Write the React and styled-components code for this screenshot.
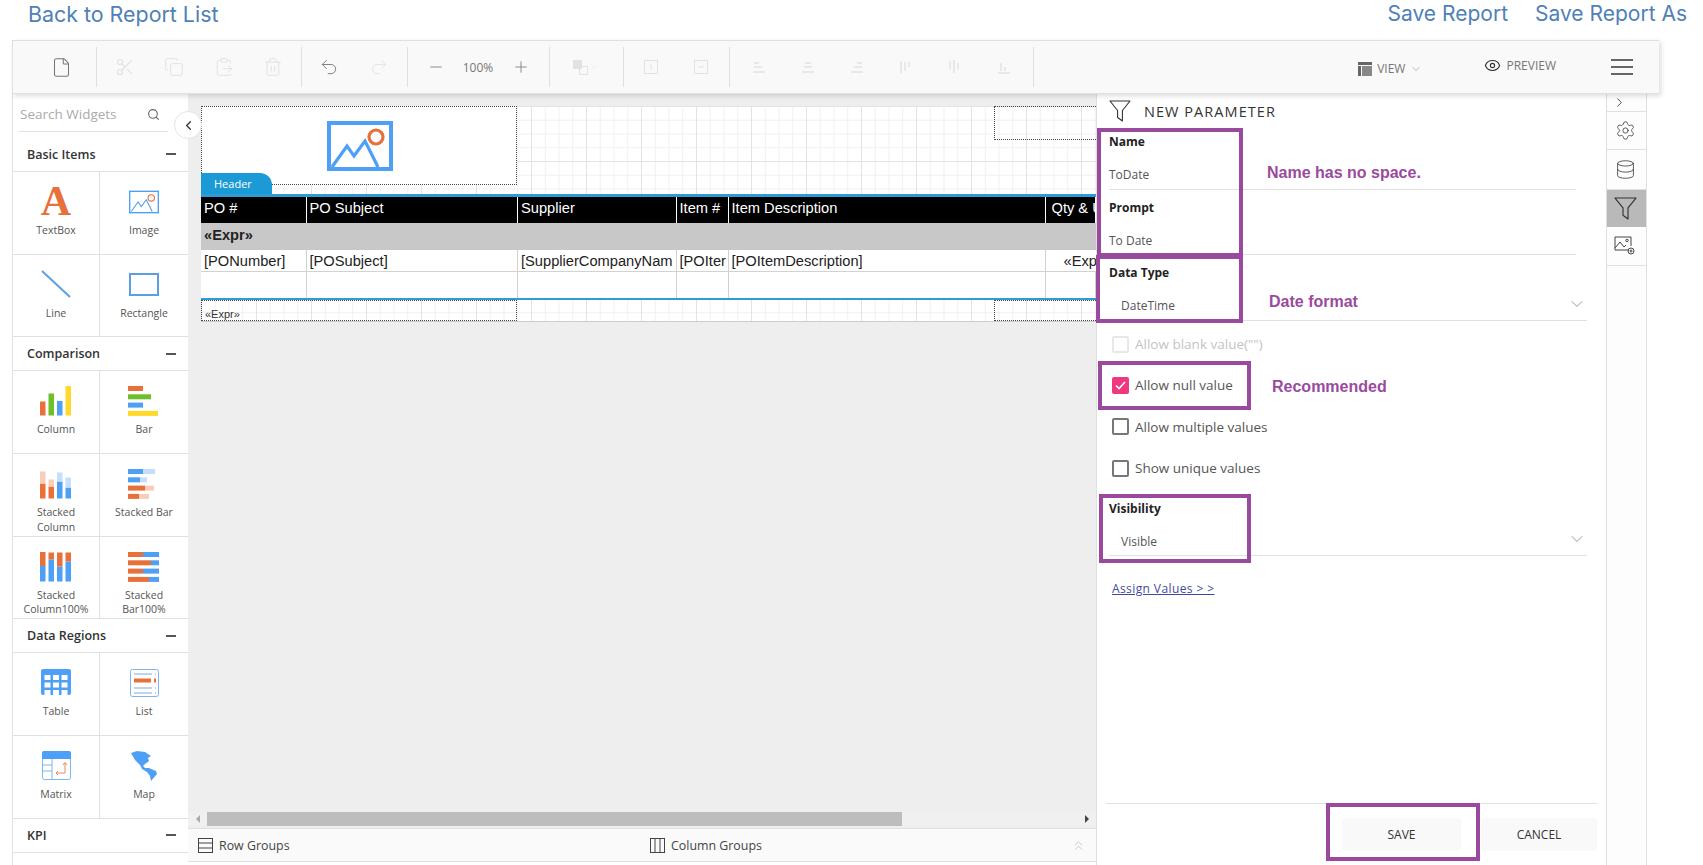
import React from 'react'
import styled, { createGlobalStyle } from 'styled-components'
import {
  File, Scissors, Copy, ClipboardPaste, Trash2, Undo2, Redo2, Minus, Plus, Eye,
  Search, ChevronRight, ChevronDown, ChevronsUp, Settings, Database, ChevronLeft
} from 'lucide-react'

const purple = '#9a4a9e'
const faint = '#e2e2e2'
const line = '#e0e0e0'
const orange = '#e8703a'
const blue = '#4da0f5'
const green = '#6fbf2a'
const yellow = '#ffd92a'
const lightOrange = '#f8cdb9'
const lightBlue = '#c4dffb'

const GlobalStyle = createGlobalStyle`
  html, body {
    margin: 0;
    height: 865px;
    overflow: hidden;
    background: #fff;
    font-family: 'Open Sans', sans-serif;
  }
`

const Page = styled.div`
  width: 1703px;
  height: 865px;
  overflow: hidden;
`

const TopBar = styled.div`
  height: 40px;
  box-sizing: border-box;
  padding: 0 16px 12px 28px;
  display: flex;
  align-items: center;
  justify-content: space-between;
`

const TopLinks = styled.div`
  display: flex;
  gap: 27px;
`

const TopLink = styled.a`
  font-family: 'Inter', sans-serif;
  font-size: ${p => p.$size || 21}px;
  line-height: 28px;
  color: #4f80b8;
  white-space: nowrap;
`

const Toolbar = styled.div`
  margin-left: 12px;
  width: 1647px;
  height: 54px;
  box-sizing: border-box;
  background: #f9f9f9;
  border: 1px solid ${line};
  border-right: 0;
  box-shadow: 2px 2px 5px rgba(0, 0, 0, 0.14);
  display: flex;
  align-items: center;
  position: relative;
  z-index: 2;
`

const ToolGroup = styled.div`
  width: ${p => p.$w}px;
  height: 40px;
  box-sizing: border-box;
  flex: none;
  display: flex;
  align-items: center;
  justify-content: ${p => (p.$start ? 'flex-start' : 'center')};
  padding-left: ${p => p.$pad || 0}px;
  border-right: 1px solid ${line};
`

const Tool = styled.div`
  width: ${p => p.$w || 49.5}px;
  flex: none;
  display: flex;
  align-items: center;
  justify-content: center;
  color: ${p => (p.$on ? '#777' : faint)};
  font-size: 12px;
`

const ToolRight = styled.div`
  margin-left: auto;
  display: flex;
  align-items: center;
  padding-right: 26px;
`

const ToolText = styled.div`
  display: flex;
  align-items: center;
  gap: ${p => p.$gap || 5}px;
  margin-right: ${p => p.$mr}px;
  margin-top: ${p => p.$mt || 0}px;
  font-size: 12px;
  color: #777;
`

const Burger = styled.div`
  width: 22px;
  height: 16px;
  border-top: 2px solid #666;
  border-bottom: 2px solid #666;
  box-sizing: border-box;
  display: flex;
  align-items: center;
  &::before {
    content: '';
    width: 100%;
    height: 2px;
    background: #666;
  }
`

const Body = styled.div`
  display: flex;
  margin-left: 12px;
  height: 771px;
`

const Sidebar = styled.div`
  width: 176px;
  flex: none;
  box-sizing: border-box;
  border-left: 1px solid ${line};
  position: relative;
`

const SearchRow = styled.div`
  margin: 0 20px 0 6px;
  height: 38px;
  box-sizing: border-box;
  border-bottom: 1px solid ${line};
  padding: 3px 8px 0 1px;
  display: flex;
  align-items: center;
  justify-content: space-between;
  font-size: 13.5px;
  color: #aaa;
`

const SearchIcon = styled(Search)`
  color: #666;
`

const CollapseButton = styled.div`
  position: absolute;
  top: 17px;
  right: -14px;
  width: 28px;
  height: 28px;
  border-radius: 50%;
  background: #fff;
  border: 1px solid #e4e4e4;
  box-sizing: border-box;
  display: flex;
  align-items: center;
  justify-content: center;
  color: #333;
  z-index: 3;
`

const SectionHead = styled.div`
  height: ${p => p.$h || 34}px;
  box-sizing: border-box;
  padding: ${p => (p.$first ? '5px' : '0')} 12px 0 14px;
  display: flex;
  align-items: center;
  justify-content: space-between;
  font-size: 12.5px;
  font-weight: 600;
  color: #333;
  border-bottom: 1px solid ${line};
`

const Collapse = styled.span`
  width: 10px;
  height: 2px;
  background: #555;
`

const WidgetGrid = styled.div`
  display: grid;
  grid-template-columns: 87px 88px;
`

const WidgetCell = styled.div`
  height: 82.7px;
  box-sizing: border-box;
  padding-top: 13px;
  border-bottom: 1px solid ${line};
  border-right: 1px solid ${line};
  display: flex;
  flex-direction: column;
  align-items: center;
  overflow: hidden;
  &:nth-child(2n) {
    border-right: 0;
  }
`

const WidgetIcon = styled.div`
  height: 33px;
  flex: none;
  display: flex;
  align-items: center;
  justify-content: center;
`

const LetterIcon = styled.span`
  font-family: 'Liberation Serif', serif;
  font-size: 42px;
  line-height: 33px;
  font-weight: 700;
  color: ${orange};
`

const WidgetLabel = styled.div`
  max-width: 72px;
  margin-top: 5px;
  font-size: 10.5px;
  line-height: 14.5px;
  text-align: center;
  color: #555;
`

const Canvas = styled.div`
  width: 908px;
  flex: none;
  display: flex;
  flex-direction: column;
  height: 768px;
  background: #eee;
  border-bottom: 1px solid ${line};
  box-sizing: border-box;
`

const ScrollArea = styled.div`
  flex: 1;
  min-height: 0;
  overflow: hidden;
  padding: 12px 0 0 13px;
`

const Surface = styled.div`
  width: 895px;
  background-color: #fff;
  background-image:
    linear-gradient(to right, #e3e3e3 1px, transparent 1px),
    linear-gradient(to bottom, #e3e3e3 1px, transparent 1px),
    linear-gradient(to right, #f0f0f0 1px, transparent 1px),
    linear-gradient(to bottom, #f0f0f0 1px, transparent 1px);
  background-size: 55px 55px, 55px 55px, 13.75px 13.75px, 13.75px 13.75px;
  border-bottom: 1px solid #ccc;
  overflow: hidden;
`

const HeaderBand = styled.div`
  height: 88px;
  position: relative;
`

const DottedBox = styled.div`
  position: absolute;
  top: 0;
  left: ${p => p.$x}px;
  width: ${p => p.$w}px;
  height: ${p => p.$h}px;
  box-sizing: border-box;
  border: 1px dotted #444;
  background: ${p => p.$bg || 'transparent'};
`

const PlaceholderSlot = styled.div`
  position: absolute;
  left: 125px;
  top: 14px;
`

const HeaderTab = styled.div`
  position: absolute;
  left: 0;
  bottom: 0;
  width: 71px;
  height: 21px;
  box-sizing: border-box;
  padding-left: 13px;
  background: #1b9ad6;
  color: #fff;
  font-size: 11px;
  line-height: 22px;
  border-top-right-radius: 12px;
`

const BlueRule = styled.div`
  height: 2.5px;
  background: #2f9bd6;
`

const ReportRow = styled.div`
  display: grid;
  grid-template-columns: 105.5px 211.5px 158.5px 52px 317px 50.5px;
  height: ${p => p.$h}px;
  background: ${p => p.$bg || '#fff'};
  color: ${p => p.$color || '#222'};
  font-family: 'Liberation Sans', sans-serif;
  font-size: 14.67px;
  font-weight: ${p => (p.$bold ? 700 : 400)};
`

const ReportCell = styled.div`
  box-sizing: border-box;
  padding-left: ${p => p.$pad || 3}px;
  overflow: hidden;
  white-space: nowrap;
  line-height: ${p => p.$lh || 22}px;
  border-right: ${p => (p.$plain ? 0 : `1px solid ${p.$edge || '#d2d2d2'}`)};
  border-bottom: ${p => (p.$rule ? '1px solid #d2d2d2' : 0)};
`

const WideCell = styled(ReportCell)`
  grid-column: 1 / -1;
  border-right: 0;
`

const FooterBand = styled.div`
  height: 20.5px;
  position: relative;
`

const FooterExpr = styled.div`
  position: absolute;
  left: 3px;
  top: 6px;
  font-family: 'Liberation Sans', sans-serif;
  font-size: 11px;
  line-height: 14px;
  color: #333;
`

const ScrollBar = styled.div`
  height: 14px;
  margin-bottom: 2px;
  flex: none;
  display: flex;
  align-items: center;
  background: #f0f0f0;
`

const ScrollThumb = styled.div`
  width: 695px;
  height: 14px;
  background: #bdbdbd;
  margin: 0 auto 0 7px;
`

const Arrow = styled.span`
  width: 0;
  height: 0;
  border-top: 4px solid transparent;
  border-bottom: 4px solid transparent;
  border-${p => (p.$right ? 'left' : 'right')}: 4px solid ${p => (p.$right ? '#444' : '#aaa')};
  margin: ${p => (p.$right ? '0 7px 0 0' : '0 0 0 8px')};
`

const GroupBar = styled.div`
  height: 33px;
  flex: none;
  box-sizing: border-box;
  background: #fafafa;
  border-top: 1px solid ${line};
  display: grid;
  grid-template-columns: 452px 1fr 36px;
  align-items: center;
  padding-left: 10px;
  font-size: 12.4px;
  color: #444;
`

const GroupLabel = styled.div`
  display: flex;
  align-items: center;
  gap: 6px;
`

const UpChevrons = styled(ChevronsUp)`
  color: #aaa;
  justify-self: center;
`

const Panel = styled.div`
  width: 510px;
  flex: none;
  box-sizing: border-box;
  position: relative;
  display: flex;
  flex-direction: column;
  padding-left: 12px;
  border-left: 1px solid ${line};
`

const PanelHead = styled.div`
  height: 30px;
  box-sizing: border-box;
  padding-top: 4px;
  flex: none;
  display: flex;
  align-items: center;
  gap: 13px;
  font-size: 14.5px;
  letter-spacing: 1.05px;
  color: #333;
`

const Field = styled.div`
  height: 65.67px;
  box-sizing: border-box;
  padding-top: 9px;
  width: ${p => p.$w}px;
  border-bottom: 1px solid ${line};
  position: relative;
`

const FieldLabel = styled.div`
  font-size: 12px;
  line-height: 18px;
  font-weight: 700;
  color: #222;
`

const FieldValue = styled.div`
  margin-top: 15px;
  padding-left: ${p => p.$indent || 0}px;
  font-size: 12px;
  line-height: 18px;
  color: #555;
`

const FieldChevron = styled(ChevronDown)`
  position: absolute;
  right: 0;
  bottom: 6px;
  color: #888;
`

const CheckRows = styled.div`
  margin-top: 2.5px;
  margin-bottom: 2px;
`

const CheckRow = styled.div`
  height: 41.3px;
  display: flex;
  align-items: center;
  gap: 6px;
  padding-left: 3px;
  font-size: 13.5px;
  color: ${p => (p.$off ? '#c4c4c4' : '#555')};
`

const CheckBox = styled.span`
  width: 17px;
  height: 17px;
  flex: none;
  box-sizing: border-box;
  border-radius: 2px;
  border: ${p => (p.$on ? 0 : `2px solid ${p.$off ? '#e8e8e8' : '#777'}`)};
  background: ${p => (p.$on ? '#f0387e' : '#fff')};
  display: flex;
  align-items: center;
  justify-content: center;
`

const AssignLink = styled.a`
  margin: 24px 0 0 3px;
  font-size: 12px;
  line-height: 18px;
  letter-spacing: 0.4px;
  color: #3f4a9e;
  text-decoration: underline;
`

const PanelFoot = styled.div`
  margin: auto 9px 0 -3px;
  height: 62.5px;
  box-sizing: border-box;
  flex: none;
  border-top: 1px solid ${line};
  padding-top: 14px;
  display: flex;
  justify-content: flex-end;
  gap: 20px;
`

const FootButton = styled.div`
  width: ${p => p.$w}px;
  height: 33px;
  background: #f9f9f9;
  border-radius: 3px;
  display: flex;
  align-items: center;
  justify-content: center;
  font-size: 12px;
  color: #333;
`

const Mark = styled.div`
  position: absolute;
  left: ${p => p.$x}px;
  top: ${p => p.$y}px;
  width: ${p => p.$w}px;
  height: ${p => p.$h}px;
  box-sizing: border-box;
  border: 4.5px solid ${purple};
  pointer-events: none;
`

const Note = styled.div`
  position: absolute;
  left: ${p => p.$x}px;
  top: ${p => p.$y}px;
  font-family: 'Liberation Sans', sans-serif;
  font-size: 16px;
  line-height: 18px;
  font-weight: 700;
  color: ${purple};
  white-space: nowrap;
`

const Strip = styled.div`
  width: 41px;
  flex: none;
  box-sizing: border-box;
  background: #fdfdfd;
  border-left: 1px solid ${line};
  border-right: 1px solid ${line};
`

const StripItem = styled.div`
  height: ${p => p.$h}px;
  box-sizing: border-box;
  background: ${p => (p.$active ? '#b9b9b9' : 'transparent')};
  border-bottom: 1px solid ${p => (p.$active ? '#b9b9b9' : line)};
  display: flex;
  align-items: center;
  justify-content: ${p => (p.$left ? 'flex-start' : 'center')};
  padding-left: ${p => (p.$left ? 5 : 0)}px;
  padding-right: ${p => (p.$left ? 0 : 3)}px;
  color: #444;
`

const FunnelIcon = ({ size = 22 }) => (
  <svg width={size} height={size} viewBox="0 0 22 22" fill="none" stroke="#333" strokeWidth="1.1">
    <path d="M1 1h20l-7.6 9.5V21l-4.8-3.5v-7z" strokeLinejoin="round" />
  </svg>
)

const ImageSettingsIcon = () => (
  <svg width="22" height="20" viewBox="0 0 22 20" fill="none" stroke="#444" strokeWidth="1">
    <path d="M15 14H1V1h16v9" />
    <path d="M1 12l5-6 4 5 2-2" />
    <circle cx="13" cy="4.5" r="1.2" />
    <circle cx="17" cy="15" r="3" />
    <circle cx="17" cy="15" r="1" />
  </svg>
)

const PictureIcon = ({ w, h, sw }) => (
  <svg width={w} height={h} viewBox="0 0 66 50" fill="none">
    <rect x={sw / 2} y={sw / 2} width={66 - sw} height={50 - sw} stroke={blue} strokeWidth={sw} fill="#fff" />
    <path d="M5 46l15-21 7 10 11-15 13 26" stroke={blue} strokeWidth={sw * 0.8} />
    <circle cx="49" cy="16" r="7" stroke={orange} strokeWidth={sw * 0.8} />
  </svg>
)

const Bars = ({ bars, vertical }) => (
  <svg width="32" height="31" viewBox="0 0 32 31">
    {bars.map((b, i) => {
      let pos = 0
      return b.map(([len, fill], j) => {
        const from = pos
        pos += len
        return vertical
          ? <rect key={`${i}-${j}`} x={i * 8.5} y={30.5 - pos} width="5.5" height={len} fill={fill} />
          : <rect key={`${i}-${j}`} y={i * 8.3 + 1} x={from} width={len} height="5" fill={fill} />
      })
    })}
  </svg>
)

const TableIcon = () => (
  <svg width="30" height="27" viewBox="0 0 30 27">
    <rect width="30" height="26" rx="2" fill={blue} />
    {[4, 11.5, 19].map(y => [3.5, 12, 20.5].map(x => (
      <rect key={`${x}-${y}`} x={x} y={y + 2} width="6" height="5" fill="#fff" />
    )))}
  </svg>
)

const ListIcon = () => (
  <svg width="29" height="28" viewBox="0 0 29 28" fill="none">
    <rect x="0.5" y="0.5" width="28" height="27" rx="2" stroke="#7fb5f0" />
    <path d="M4 5h18M25 5h1M4 19h18M25 19h1M4 24h18M25 24h1" stroke="#7fa9dc" />
    <rect x="4" y="9.5" width="17" height="4" fill={orange} />
    <rect x="24" y="9.5" width="2" height="4" fill={orange} />
  </svg>
)

const MatrixIcon = () => (
  <svg width="29" height="29" viewBox="0 0 29 29" fill="none">
    <rect x="0.5" y="0.5" width="28" height="28" rx="2" stroke="#7fb5f0" />
    <path d="M0 2a2 2 0 012-2h25a2 2 0 012 2v6H0z" fill={blue} />
    <path d="M10 8v20M0 14h10M0 20h10" stroke="#7fb5f0" />
    <path d="M23 12v10h-9M21 14l2-2.500 2 2.500M16 20l-2 2 2 2" stroke="#e58a66" />
  </svg>
)

const MapIcon = () => (
  <svg width="26" height="30" viewBox="0 0 26 30">
    <path d="M0 2L6 0L14 1L20 5L17 7L18 10L14 13L12 15L14 17L18 17L25 20L26 23L20 30L19 25L16 21L11 18L9 14L4 9Z" fill={blue} />
  </svg>
)

const ViewIcon = () => (
  <svg width="14" height="14" viewBox="0 0 14 14">
    <rect width="14" height="3" fill="#666" />
    <rect y="4" width="3" height="10" fill="#666" />
    <rect x="4" y="4" width="10" height="10" fill="#888" />
  </svg>
)

const FillIcon = () => (
  <svg width="16" height="16" viewBox="0 0 16 16">
    <rect x="1" y="1" width="9" height="9" fill={faint} />
    <rect x="7.500" y="7.500" width="8" height="8" fill="none" stroke={faint} />
  </svg>
)

const BoxGlyph = ({ minus }) => (
  <svg width="20" height="20" viewBox="0 0 20 20" fill="none" stroke={faint}>
    <rect x="3.500" y="3.500" width="13" height="13" />
    {minus ? <path d="M7 10h6" /> : <path d="M10 7v6" />}
  </svg>
)

const AlignGlyph = ({ d }) => (
  <svg width="20" height="20" viewBox="0 0 20 20" fill="none" stroke={faint} strokeWidth="1.5">
    <path d={d} />
  </svg>
)

const alignGlyphs = [
  'M4 15h12M5 6h5M5 10h8',
  'M4 15h12M7 6h6M6 10h8',
  'M4 15h12M10 6h5M7 10h8',
  'M5 4v12M9 5v9M13 5v5',
  'M5 4v8M9 3v13M13 6v6',
  'M4 16h12M7 6v8M11 10v4'
]

const widgets = {
  basic: [
    ['TextBox', <LetterIcon key="a">A</LetterIcon>],
    ['Image', <PictureIcon key="i" w={30} h={24} sw={3} />],
    ['Line', <svg key="l" width="30" height="28"><path d="M1 1l28 26" stroke="#5a9ee8" strokeWidth="2" /></svg>],
    ['Rectangle', <svg key="r" width="30" height="23"><rect x="1" y="1" width="28" height="21" fill="none" stroke="#5a9ee8" strokeWidth="2" /></svg>]
  ],
  comparison: [
    ['Column', <Bars key="c" vertical bars={[[[14, orange]], [[22, green]], [[14.5, blue]], [[29.5, yellow]]]} />],
    ['Bar', <Bars key="b" bars={[[[15, orange]], [[23, green]], [[15, blue]], [[30, yellow]]]} />],
    ['Stacked Column', <Bars key="sc" vertical bars={[[[15, orange], [12, lightOrange]], [[12, orange], [7, lightOrange]], [[17, blue], [9, lightBlue]], [[11, blue], [10, lightBlue]]]} />],
    ['Stacked Bar', <Bars key="sb" bars={[[[15, blue], [12, lightBlue]], [[12, blue], [7, lightBlue]], [[17, orange], [9, lightOrange]], [[11, orange], [10, lightOrange]]]} />],
    ['Stacked Column100%', <Bars key="sc1" vertical bars={[[[15.5, blue], [14, orange]], [[22, blue], [7, orange]], [[15, blue], [14, orange]], [[20, blue], [9, orange]]]} />],
    ['Stacked Bar100%', <Bars key="sb1" bars={[[[15, orange], [16, blue]], [[23, orange], [8, blue]], [[15, orange], [16, blue]], [[21, orange], [10, blue]]]} />]
  ],
  regions: [
    ['Table', <TableIcon key="t" />],
    ['List', <ListIcon key="l" />],
    ['Matrix', <MatrixIcon key="m" />],
    ['Map', <MapIcon key="p" />]
  ]
}

const WidgetSet = ({ items }) => (
  <WidgetGrid>
    {items.map(([label, icon]) => (
      <WidgetCell key={label}>
        <WidgetIcon>{icon}</WidgetIcon>
        <WidgetLabel>{label}</WidgetLabel>
      </WidgetCell>
    ))}
  </WidgetGrid>
)

const columns = ['PO #', 'PO Subject', 'Supplier', 'Item #', 'Item Description', 'Qty & U']
const details = ['[PONumber]', '[POSubject]', '[SupplierCompanyNam', '[POIter', '[POItemDescription]']

const ReportTable = () => (
  <>
    <ReportRow $h={26} $bg="#000" $color="#fff">
      {columns.map((c, i) => (
        <ReportCell key={c} $lh={22} $edge="#fff" $pad={i === 5 ? 6 : 3}>{c}</ReportCell>
      ))}
    </ReportRow>
    <ReportRow $h={27} $bg="#c9c8c8" $bold>
      <WideCell $lh={25}>«Expr»</WideCell>
    </ReportRow>
    <ReportRow $h={22.5}>
      {details.map(d => <ReportCell key={d} $rule>{d}</ReportCell>)}
      <ReportCell $rule $plain $pad={18}>«Exp</ReportCell>
    </ReportRow>
    <ReportRow $h={25.5}>
      {columns.map(c => <ReportCell key={c} />)}
    </ReportRow>
  </>
)

export default function App() {
  return (
    <Page>
      <GlobalStyle />
      <TopBar>
        <TopLink $size={21.4}>Back to Report List</TopLink>
        <TopLinks>
          <TopLink>Save Report</TopLink>
          <TopLink>Save Report As</TopLink>
        </TopLinks>
      </TopBar>

      <Toolbar>
        <ToolGroup $w={84} $pad={24} $start>
          <Tool $on $w={49}><File size={21} strokeWidth={1.2} /></Tool>
        </ToolGroup>
        <ToolGroup $w={204.5}>
          <Tool><Scissors size={20} strokeWidth={1.4} /></Tool>
          <Tool><Copy size={20} strokeWidth={1.2} /></Tool>
          <Tool><ClipboardPaste size={20} strokeWidth={1.2} /></Tool>
          <Tool><Trash2 size={20} strokeWidth={1.2} /></Tool>
        </ToolGroup>
        <ToolGroup $w={106}>
          <Tool $on><Undo2 size={20} strokeWidth={1.1} /></Tool>
          <Tool><Redo2 size={20} strokeWidth={1.1} /></Tool>
        </ToolGroup>
        <ToolGroup $w={142}>
          <Tool $on $w={42.5}><Minus size={18} strokeWidth={1.1} /></Tool>
          <Tool $on $w={42.5}>100%</Tool>
          <Tool $on $w={42.5}><Plus size={18} strokeWidth={1.1} /></Tool>
        </ToolGroup>
        <ToolGroup $w={74}>
          <FillIcon />
          <ChevronDown size={12} strokeWidth={1} color={faint} />
        </ToolGroup>
        <ToolGroup $w={106}>
          <Tool><BoxGlyph /></Tool>
          <Tool><BoxGlyph minus /></Tool>
        </ToolGroup>
        <ToolGroup $w={304}>
          {alignGlyphs.map(d => <Tool key={d} $w={49}><AlignGlyph d={d} /></Tool>)}
        </ToolGroup>
        <ToolRight>
          <ToolText $mr={62} $mt={3}>
            <ViewIcon />
            <span>VIEW</span>
            <ChevronDown size={12} strokeWidth={1} />
          </ToolText>
          <ToolText $mr={55} $mt={-4}>
            <Eye size={17} strokeWidth={1.6} color="#333" />
            <span>PREVIEW</span>
          </ToolText>
          <Burger />
        </ToolRight>
      </Toolbar>

      <Body>
        <Sidebar>
          <SearchRow>
            <span>Search Widgets</span>
            <SearchIcon size={13} />
          </SearchRow>
          <CollapseButton><ChevronLeft size={15} strokeWidth={2} /></CollapseButton>
          <SectionHead $first $h={40}>Basic Items<Collapse /></SectionHead>
          <WidgetSet items={widgets.basic} />
          <SectionHead>Comparison<Collapse /></SectionHead>
          <WidgetSet items={widgets.comparison} />
          <SectionHead>Data Regions<Collapse /></SectionHead>
          <WidgetSet items={widgets.regions} />
          <SectionHead>KPI<Collapse /></SectionHead>
        </Sidebar>

        <Canvas>
          <ScrollArea>
            <Surface>
              <HeaderBand>
                <DottedBox $x={0} $w={316} $h={78.5} $bg="#fff">
                  <PlaceholderSlot><PictureIcon w={66} h={50} sw={4} /></PlaceholderSlot>
                </DottedBox>
                <DottedBox $x={792.5} $w={110} $h={33.5} />
                <HeaderTab>Header</HeaderTab>
              </HeaderBand>
              <BlueRule />
              <ReportTable />
              <BlueRule />
              <FooterBand>
                <DottedBox $x={0} $w={316} $h={20.5}><FooterExpr>«Expr»</FooterExpr></DottedBox>
                <DottedBox $x={792.5} $w={110} $h={20.5} />
              </FooterBand>
            </Surface>
          </ScrollArea>
          <ScrollBar>
            <Arrow />
            <ScrollThumb />
            <Arrow $right />
          </ScrollBar>
          <GroupBar>
            <GroupLabel>
              <svg width="15" height="15" viewBox="0 0 15 15" fill="none" stroke="#444"><rect x="0.5" y="0.5" width="14" height="14" /><path d="M0 5h15M0 10h15" /></svg>
              Row Groups
            </GroupLabel>
            <GroupLabel>
              <svg width="15" height="15" viewBox="0 0 15 15" fill="none" stroke="#444"><rect x="0.5" y="0.5" width="14" height="14" /><path d="M5 0v15M10 0v15" /></svg>
              Column Groups
            </GroupLabel>
            <UpChevrons size={15} strokeWidth={1} />
          </GroupBar>
        </Canvas>

        <Panel>
          <PanelHead>
            <FunnelIcon />
            NEW PARAMETER
          </PanelHead>
          <Field $w={466.5}>
            <FieldLabel>Name</FieldLabel>
            <FieldValue>ToDate</FieldValue>
          </Field>
          <Field $w={466.5}>
            <FieldLabel>Prompt</FieldLabel>
            <FieldValue>To Date</FieldValue>
          </Field>
          <Field $w={478}>
            <FieldLabel>Data Type</FieldLabel>
            <FieldValue $indent={12}>DateTime</FieldValue>
            <FieldChevron size={20} strokeWidth={1} />
          </Field>
          <CheckRows>
            <CheckRow $off><CheckBox $off />Allow blank value("")</CheckRow>
            <CheckRow>
              <CheckBox $on>
                <svg width="11" height="9" viewBox="0 0 11 9" fill="none" stroke="#fff" strokeWidth="1.6"><path d="M1 4.500l3 3 6-6.500" /></svg>
              </CheckBox>
              Allow null value
            </CheckRow>
            <CheckRow><CheckBox />Allow multiple values</CheckRow>
            <CheckRow><CheckBox />Show unique values</CheckRow>
          </CheckRows>
          <Field $w={478}>
            <FieldLabel>Visibility</FieldLabel>
            <FieldValue $indent={12}>Visible</FieldValue>
            <FieldChevron size={20} strokeWidth={1} />
          </Field>
          <AssignLink>Assign Values &gt; &gt;</AssignLink>
          <PanelFoot>
            <FootButton $w={119}>SAVE</FootButton>
            <FootButton $w={116}>CANCEL</FootButton>
          </PanelFoot>

          <Mark $x={0} $y={34} $w={146} $h={129} />
          <Mark $x={-1} $y={161} $w={147} $h={68} />
          <Mark $x={1} $y={267} $w={153} $h={49} />
          <Mark $x={2} $y={400} $w={152} $h={69} />
          <Mark $x={229} $y={709} $w={154} $h={58} />
          <Note $x={170} $y={70}>Name has no space.</Note>
          <Note $x={172} $y={199}>Date format</Note>
          <Note $x={175} $y={284}>Recommended</Note>
        </Panel>

        <Strip>
          <StripItem $h={18} $left><ChevronRight size={15} strokeWidth={1.5} /></StripItem>
          <StripItem $h={38}><Settings size={21} strokeWidth={1} /></StripItem>
          <StripItem $h={40}><Database size={21} strokeWidth={1} /></StripItem>
          <StripItem $h={37} $active><FunnelIcon size={23} /></StripItem>
          <StripItem $h={39}><ImageSettingsIcon /></StripItem>
        </Strip>
      </Body>
    </Page>
  )
}
